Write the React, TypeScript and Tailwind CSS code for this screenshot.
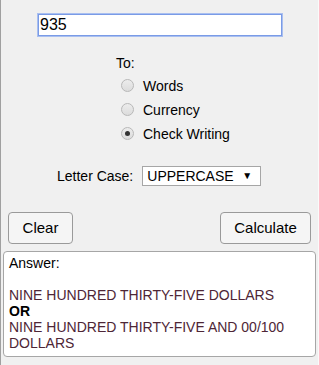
import React, { useState } from 'react';

const options = ['Words', 'Currency', 'Check Writing'];

const App: React.FC = () => {
    const [value, setValue] = useState('935');
    const [mode, setMode] = useState('Check Writing');

    return (
        <div className="w-[319px] h-[365px] bg-[#f0f0f0] border-l border-[#a0a0a0] border-r border-r-[#fafafa] overflow-hidden text-[14px] leading-4 text-black" style={{ fontFamily: '"Liberation Sans", Arial, sans-serif' }}>
            <div className="pt-[14px] pl-[37px]">
                <input
                    className="block w-[244px] h-[22px] bg-white border border-[#7a9be6] outline outline-1 outline-[#a9bff0] px-[1px] text-[16px] text-black"
                    value={value}
                    onChange={(e) => setValue(e.target.value)}
                />
            </div>

            {/* opciones de salida */}
            <div className="pl-[115px] pt-[19px]">
                <div className="h-4">To:</div>
                <div className="mt-[6px] flex flex-col gap-[7px]">
                    {options.map((opt) => (
                        <label key={opt} className="flex items-center h-[17px]">
                            <span className="ml-[5px] w-[13px] h-[13px] rounded-full border border-[#b8b8b8] bg-[linear-gradient(#ececec,#dcdcdc)] flex items-center justify-center">
                                {mode === opt && <span className="w-[5px] h-[5px] rounded-full bg-[#333]" />}
                            </span>
                            <input type="radio" className="hidden" checked={mode === opt} onChange={() => setMode(opt)} />
                            <span className="ml-[9px]">{opt}</span>
                        </label>
                    ))}
                </div>
            </div>

            <div className="flex items-center pt-[24px] pl-[56px]">
                <span>Letter Case:</span>
                <div className="ml-[9px] w-[119px] h-[20px] bg-white border border-[#a6a6a6] flex items-center justify-between pl-[4px] pr-[8px]">
                    <span>UPPERCASE</span>
                    <span className="text-[10px]">▼</span>
                </div>
            </div>

            <div className="flex justify-between pt-[26px] pl-[7px] pr-[7px]">
                <button className="w-[65px] h-[32px] bg-[#f5f5f5] border border-[#9a9a9a] rounded-[4px] text-[15px]">Clear</button>
                <button className="w-[91px] h-[32px] bg-[#f5f5f5] border border-[#9a9a9a] rounded-[4px] text-[15px]">Calculate</button>
            </div>

            <div className="mt-[7px] mx-[2px] w-[313px] h-[106px] bg-white border border-[#a6a6a6] rounded-[4px] pt-[3px] px-[5px]">
                <div>Answer:</div>
                <div className="h-4" />
                <div className="text-[#4e2636]">NINE HUNDRED THIRTY-FIVE DOLLARS</div>
                <div className="font-bold">OR</div>
                <div className="text-[#4e2636]">NINE HUNDRED THIRTY-FIVE AND 00/100 DOLLARS</div>
            </div>
        </div>
    );
};

export default App;
